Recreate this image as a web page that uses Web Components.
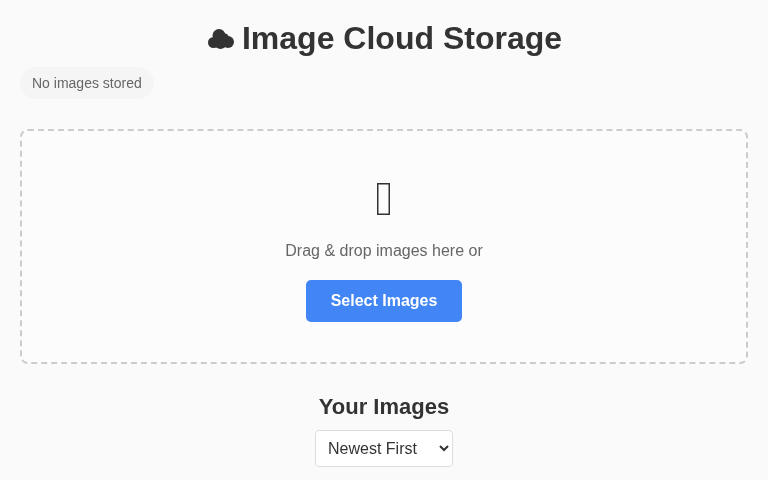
<!DOCTYPE html>
<html><head><meta charset="utf-8"><style>
html,body{margin:0;padding:0;background:#fafafa;overflow:hidden;height:480px}
body{font-family:"Liberation Sans",Arial,sans-serif;color:#333}
</style></head><body>
<app-shell></app-shell>
<script>
class AppShell extends HTMLElement{constructor(){super();this.attachShadow({mode:'open'}).innerHTML=`<style>
:host{display:block;padding:20px;will-change:transform}
h1{margin:0 0 10px;font-size:32px;line-height:37px;font-weight:700;color:#333;display:flex;justify-content:center;align-items:center;gap:8px}
h1 svg{width:26px;height:22px;fill:#333;margin-left:2px}
.stats{display:inline-block;font-size:14px;line-height:16px;padding:8px 12px;border-radius:16px;background:#f5f5f5;color:#666}
.row{margin-bottom:30px}
.drop{border:2px dashed #ccc;border-radius:8px;padding:40px 20px;text-align:center;height:151px;margin-bottom:30px;background:#fcfcfc}
.ic{height:56px;display:flex;justify-content:center;padding:12px 2px 0 0;box-sizing:border-box}
.ic svg{width:13px;height:32px}
p{margin:15px 0 20px;font-size:16px;line-height:18px;color:#666}
button{font:700 16px "Liberation Sans",Arial,sans-serif;background:#4285f4;color:#fff;border:0;border-radius:5px;width:156px;height:42px}
h2{font-size:22px;line-height:26px;margin:0 0 10px;text-align:center;color:#333}
.sel{text-align:center}
select{font:16px "Liberation Sans",Arial,sans-serif;padding:8px;border:1px solid #ddd;border-radius:4px;background:#fff;color:#333;height:37px;width:138px}
</style>
<h1><svg viewBox="0 0 26 22"><circle cx="11" cy="7.5" r="6.5"/><circle cx="5.5" cy="14.5" r="5.5"/><circle cx="20" cy="14" r="6"/><circle cx="16.5" cy="9.5" r="4"/><circle cx="12.5" cy="15" r="6"/></svg><span>Image Cloud Storage</span></h1>
<div class="row"><span class="stats">No images stored</span></div>
<div class="drop"><div class="ic"><svg viewBox="0 0 13 32"><rect x=".75" y=".75" width="11.5" height="30.5" fill="none" stroke="#333" stroke-width="1.5"/></svg></div><p>Drag &amp; drop images here or</p><button>Select Images</button></div>
<h2>Your Images</h2>
<div class="sel"><select><option>Newest First</option><option>Oldest First</option><option>Largest First</option><option>Smallest First</option></select></div>`}}
customElements.define('app-shell',AppShell);
</script></body></html>
